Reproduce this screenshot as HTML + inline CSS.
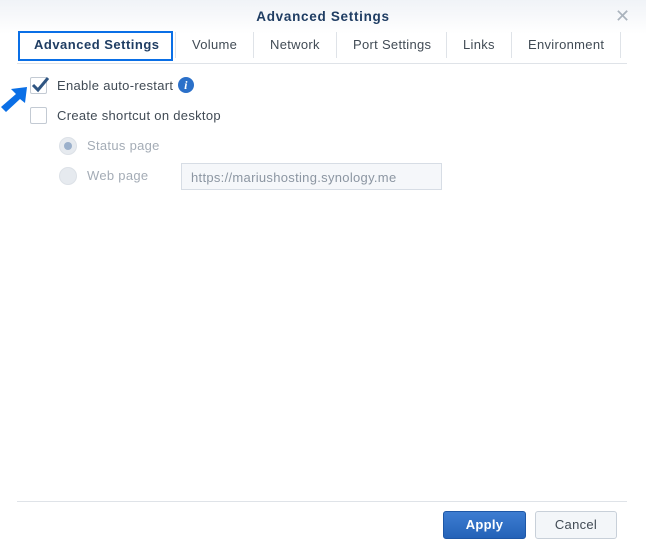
<!DOCTYPE html>
<html><head><style>
*{box-sizing:border-box;margin:0;padding:0}
body{width:646px;height:543px;background:#fff;font-family:"Liberation Sans",sans-serif;font-size:13px;letter-spacing:0.3px;color:#414b55;position:relative;overflow:hidden}
.hdr{position:absolute;left:0;top:0;width:646px;height:34px;background:linear-gradient(#f0f3f7,#fff)}
.title{position:absolute;top:9px;left:0;width:646px;text-align:center;font-weight:bold;font-size:13.5px;letter-spacing:0.7px;color:#1f3d63}
.x{position:absolute;left:615px;top:6px;font-size:18px;color:#aab3bd}
.tab{position:absolute;top:37px;font-size:13px;color:#414b55}
.sep{position:absolute;top:32px;width:1px;height:26px;background:#dfe3e8}
.abs{position:absolute}
.cb{position:absolute;width:17px;height:17px;border:1px solid #c3cad3;background:#fff;border-radius:2px}
.rd{position:absolute;width:18px;height:18px;border-radius:50%;background:#e6eaef;border:1px solid #dce1e7}
</style></head><body>
<div class="hdr"></div>
<div class="title">Advanced Settings</div>
<div class="x">✕</div>
<div class="abs" style="left:17px;top:63px;width:610px;height:1px;background:#dfe3e8"></div>
<div class="abs" style="left:18px;top:31px;width:155px;height:30px;border:2px solid #0a6fe6"></div>
<div class="tab" style="left:34px;font-weight:bold;color:#1f3d63;letter-spacing:0.5px">Advanced Settings</div>
<div class="sep" style="left:175px"></div>
<div class="tab" style="left:192px">Volume</div>
<div class="sep" style="left:253px"></div>
<div class="tab" style="left:270px">Network</div>
<div class="sep" style="left:336px"></div>
<div class="tab" style="left:353px">Port Settings</div>
<div class="sep" style="left:446px"></div>
<div class="tab" style="left:463px">Links</div>
<div class="sep" style="left:511px"></div>
<div class="tab" style="left:528px">Environment</div>
<div class="sep" style="left:620px"></div>
<div class="cb" style="left:30px;top:77px"></div>
<svg class="abs" style="left:29px;top:74px" width="22" height="20"><path d="M4 11 L9 16 L19 4" stroke="#2f5582" stroke-width="3" fill="none"/></svg>
<svg class="abs" style="left:0;top:84px" width="30" height="30"><path d="M27 3 L11 5 L16 10 L1 23 L6 28 L20 15 L25 19 Z" fill="#0a6fe6"/></svg>
<div class="abs" style="left:57px;top:78px">Enable auto-restart</div>
<div class="abs" style="left:178px;top:77px;width:16px;height:16px;border-radius:50%;background:#2b70c9;color:#fff;font:bold italic 12px 'Liberation Serif',serif;text-align:center;line-height:16px">i</div>
<div class="cb" style="left:30px;top:107px"></div>
<div class="abs" style="left:57px;top:108px">Create shortcut on desktop</div>
<div class="rd" style="left:59px;top:137px"><div style="margin:4px;width:8px;height:8px;border-radius:50%;background:#9bb0cb"></div></div>
<div class="abs" style="left:87px;top:138px;color:#a4acb6">Status page</div>
<div class="rd" style="left:59px;top:167px"></div>
<div class="abs" style="left:87px;top:168px;color:#a4acb6">Web page</div>
<div class="abs" style="left:181px;top:163px;width:261px;height:27px;border:1px solid #d7dde5;background:#f5f7fa;color:#8c96a2;padding:6px 9px">https://mariushosting.synology.me</div>
<div class="abs" style="left:17px;top:501px;width:610px;height:1px;background:#dfe3e8"></div>
<div class="abs" style="left:443px;top:511px;width:83px;height:28px;border-radius:3px;background:linear-gradient(#3e7dd1,#2462b8);border:1px solid #1e57a6;color:#fff;font-weight:bold;text-align:center;line-height:26px">Apply</div>
<div class="abs" style="left:535px;top:511px;width:82px;height:28px;border-radius:3px;background:#f3f6f9;border:1px solid #c8d0d9;color:#414b55;text-align:center;line-height:26px">Cancel</div>
</body></html>
